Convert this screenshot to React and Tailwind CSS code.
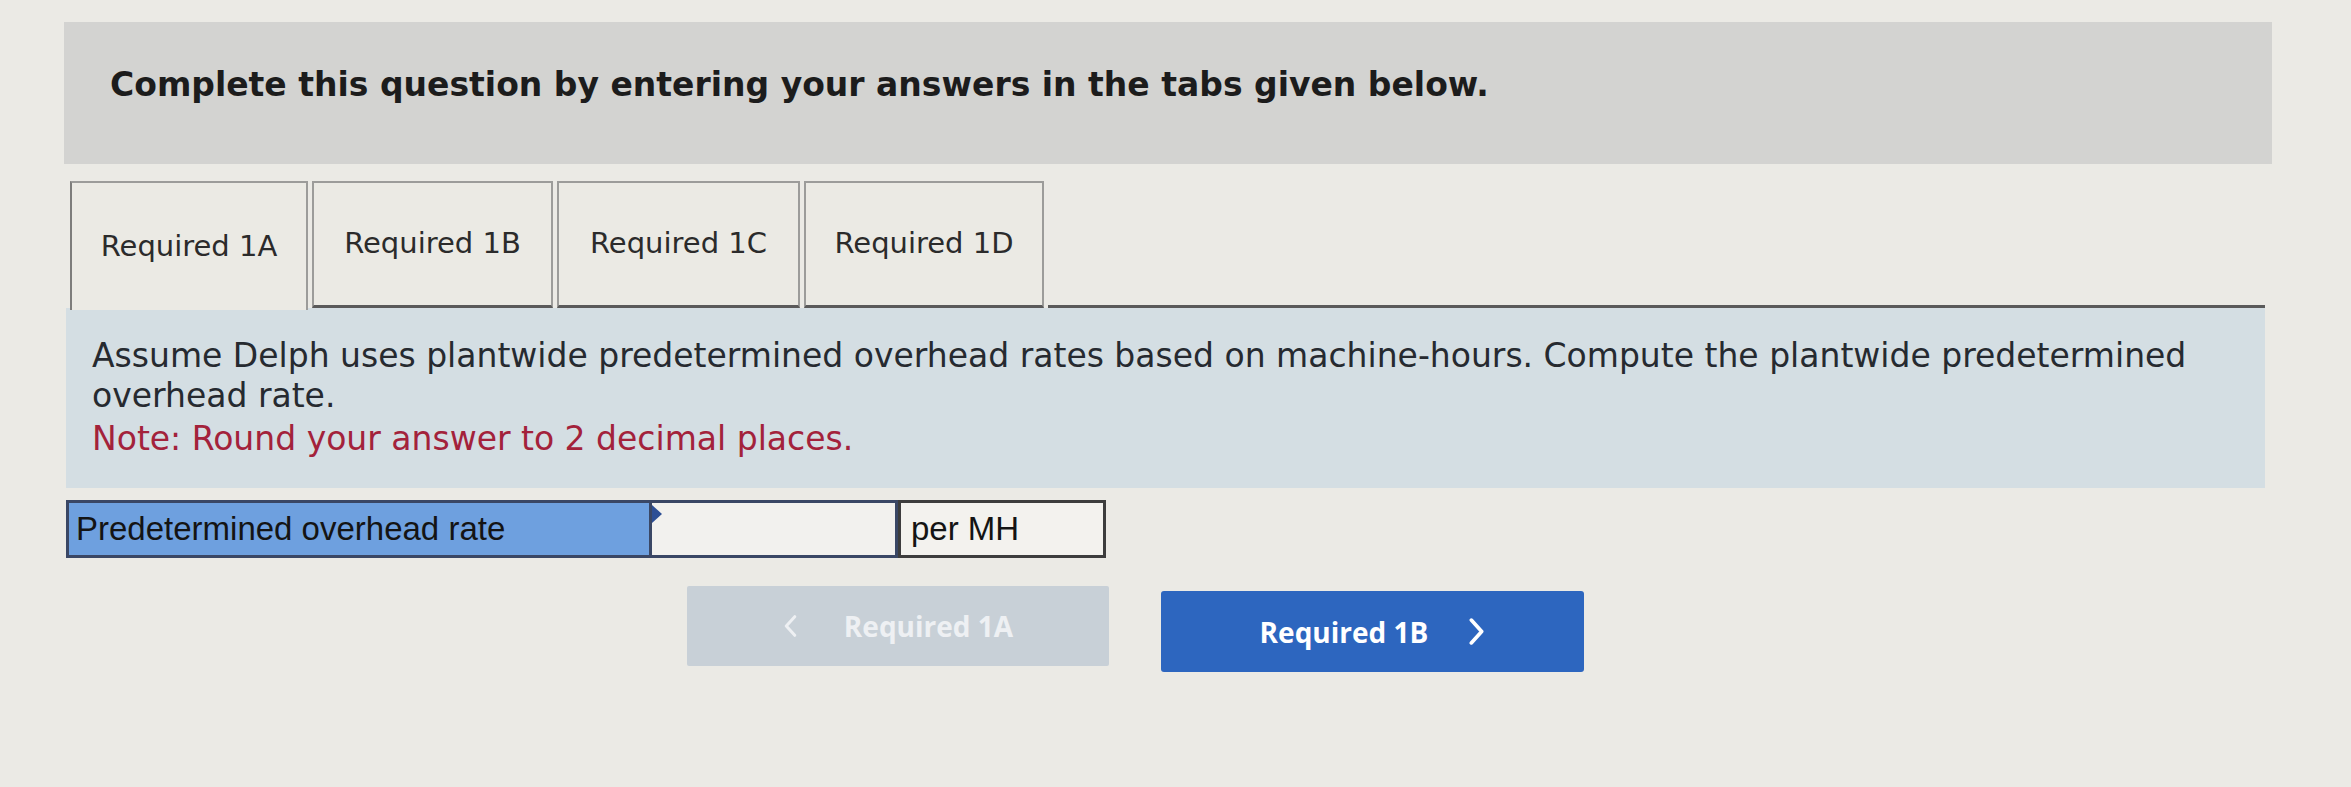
import React from 'react';

const tabs = [
  { label: 'Required 1A', width: 'w-[238px]', active: true },
  { label: 'Required 1B', width: 'w-[241px]' },
  { label: 'Required 1C', width: 'w-[243px]' },
  { label: 'Required 1D', width: 'w-[240px]' },
];

function Chevron({ dir, className }) {
  return (
    <svg viewBox="0 0 16 26" className={className} fill="none" stroke="currentColor" strokeWidth="3.5" strokeLinecap="round" strokeLinejoin="round">
      {dir === 'left' ? <polyline points="13,2 3,13 13,24" /> : <polyline points="3,2 13,13 3,24" />}
    </svg>
  );
}

export default function App() {
  return (
    <div className="min-h-screen w-full bg-[#ebeae5] pt-[22px] pl-[64px] font-['DejaVu_Sans',Verdana,sans-serif] text-[#222]">
      <div className="w-[2208px]">
        {/* Instructions header */}
        <div className="h-[142px] bg-[#d3d3d1] pl-[46px] pt-[44px]">
          <div className="text-[33px] leading-[38px] font-bold text-[#1c1c1c]">
            Complete this question by entering your answers in the tabs given below.
          </div>
        </div>

        {/* Tabs */}
        <div className="mt-[17px] flex items-end pl-[6px] pr-[7px]">
          {tabs.map((t) => (
            <div
              key={t.label}
              className={`${t.width} h-[127px] mr-[4px] flex items-center justify-center text-[29px] text-[#2b2b2b] bg-[#ebeae4] border-2 border-[#9c9c9a] ${t.active ? 'border-b-0 border-l-[#7d7d7b] h-[129px] mb-[-2px] relative z-10' : 'border-b-[#5a5a5a] border-b-[3px]'}`}
            >
              {t.label}
            </div>
          ))}
          <div className="flex-1 border-b-[3px] border-[#5a5a5a]" />
        </div>

        {/* Question panel */}
        <div className="ml-[2px] mr-[7px] bg-[#d4dee3] pl-[26px] pr-[20px] pt-[28px] pb-[29px] text-[33px] leading-[40px] text-[#262a30]">
          <p>
            Assume Delph uses plantwide predetermined overhead rates based on machine-hours. Compute the plantwide predetermined overhead rate.
          </p>
          <p className="mt-[3px] text-[#a3223b]">Note: Round your answer to 2 decimal places.</p>
        </div>

        {/* Answer row */}
        <div className="mt-[12px] ml-[2px] flex h-[58px] font-['Liberation_Sans',Arial,sans-serif] text-[33px] text-[#141414]">
          <div className="w-[586px] bg-[#6ea0df] border-[3px] border-[#3a4765] pl-[7px] flex items-center">
            Predetermined overhead rate
          </div>
          <div className="relative w-[246px] bg-[#f2f1ee] border-y-[3px] border-r-[3px] border-[#3a4765]">
            <div className="absolute left-0 top-[2px] w-0 h-0 border-t-[9px] border-t-transparent border-b-[9px] border-b-transparent border-l-[10px] border-l-[#2d4f95]" />
          </div>
          <div className="w-[208px] bg-[#f3f2ee] border-[3px] border-[#3d3d3d] pl-[10px] flex items-center">
            per MH
          </div>
        </div>

        {/* Navigation */}
        <div className="mt-[28px] ml-[623px] flex items-start gap-[52px] font-['Open_Sans','Liberation_Sans',sans-serif] text-[28px] font-bold">
          <button className="w-[422px] h-[80px] rounded-[2px] bg-[#c8d0d7] text-[#eef0f3] flex items-center justify-center gap-[46px]">
            <Chevron dir="left" className="w-[15px] h-[22px]" />
            <span>Required 1A</span>
          </button>
          <button className="mt-[5px] w-[423px] h-[81px] rounded-[3px] bg-[#2d66bf] text-white flex items-center justify-center gap-[40px]">
            <span>Required 1B</span>
            <Chevron dir="right" className="w-[17px] h-[27px]" />
          </button>
        </div>
      </div>
    </div>
  );
}
